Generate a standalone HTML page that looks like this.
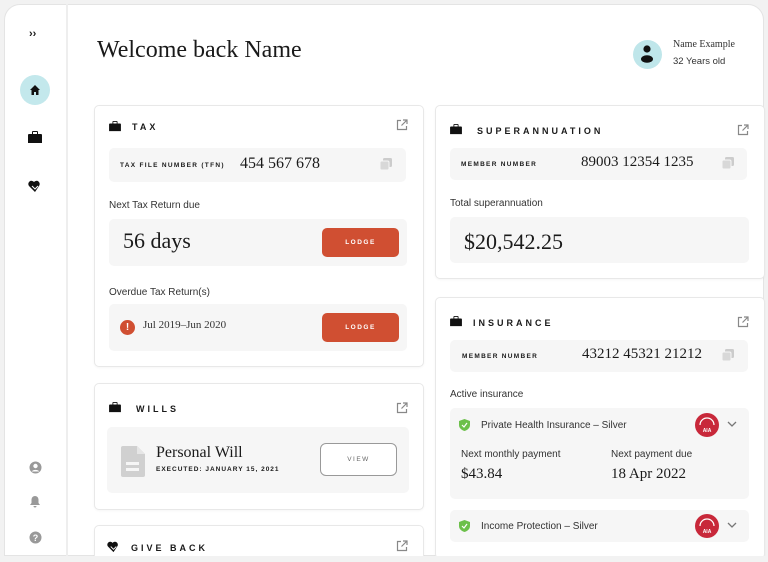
<!DOCTYPE html>
<html><head><style>
*{margin:0;padding:0;box-sizing:border-box}
html,body{width:768px;height:562px;overflow:hidden}
body{background:#f2f2f2;position:relative;font-family:"Liberation Sans",sans-serif;color:#1a1a1a}
#w{position:absolute;left:0;top:0;width:768px;height:562px;overflow:hidden}
.a{position:absolute}
.frame{left:4px;top:4px;width:760px;height:552px;background:#fff;border:1px solid #e4e4e4;border-radius:16px 16px 0 0;overflow:hidden}
.side{left:4px;top:4px;width:64px;height:552px;border-right:2px solid #eeeeee}
.card{background:#fff;border:1px solid #e8e8e8;border-radius:5px;box-shadow:0 1px 2px rgba(0,0,0,.04)}
.box{background:#f6f6f6;border-radius:5px}
.serif{font-family:"Liberation Serif",serif}
.h{font-size:9px;font-weight:bold;letter-spacing:3px}
.lab{font-size:6.5px;font-weight:bold;letter-spacing:1.3px}
.t{font-size:10px;color:#333}
.btn{background:#d04f32;border-radius:5px;color:#fff;font-size:6.5px;font-weight:bold;letter-spacing:1.5px;text-align:center}
</style></head><body><div id="w">
<div class="a frame"></div>
<div class="a side"></div>
<div class="a" style="left:29px;top:28px;font-size:11px;font-weight:bold">››</div>
<div class="a" style="left:20px;top:75px;width:30px;height:30px;border-radius:50%;background:#c3e8ec"></div>
<svg class="a" style="left:29px;top:84px" width="12" height="12" viewBox="0 0 12 12"><path d="M6 1L1 6h1.5v5h2.5V8h2v3h2.5V6H11z" fill="#111"/></svg>
<svg class="a" style="left:28px;top:131px" width="14" height="13" viewBox="0 0 14 13"><path d="M4 3V1a1 1 0 011-1h4a1 1 0 011 1v2h3a1 1 0 011 1v8H0V4a1 1 0 011-1zM5 1v2h4V1z" fill="#111" fill-rule="evenodd"/></svg>
<svg class="a" style="left:28px;top:180px" width="14" height="13" viewBox="0 0 14 13"><path d="M7 12L1 6a3.2 3.2 0 015-4 3.2 3.2 0 015 4z" fill="#111"/><path d="M4 6l3 3 3-3" stroke="#fff" stroke-width="1" fill="none"/></svg>
<svg class="a" style="left:29px;top:461px" width="13" height="13" viewBox="0 0 13 13"><circle cx="6.5" cy="6.5" r="6" fill="#999"/><circle cx="6.5" cy="5" r="2.2" fill="#fff"/><path d="M2.7 10.5a4.5 3.5 0 017.6 0" fill="#fff"/></svg>
<svg class="a" style="left:29px;top:495px" width="12" height="13" viewBox="0 0 12 13"><path d="M6 1a3.5 3.5 0 013.5 3.5V8l1.5 2H1l1.5-2V4.5A3.5 3.5 0 016 1zM4.5 11h3a1.5 1.5 0 01-3 0z" fill="#999"/></svg>
<svg class="a" style="left:29px;top:531px" width="13" height="13" viewBox="0 0 13 13"><circle cx="6.5" cy="6.5" r="6" fill="#999"/><text x="6.5" y="10" font-size="9" font-weight="bold" fill="#fff" text-anchor="middle" font-family="Liberation Sans">?</text></svg>

<div class="a serif" style="left:97px;top:37px;font-size:24px">Welcome back Name</div>
<div class="a" style="left:633px;top:40px;width:29px;height:29px;border-radius:50%;background:#bfe6ea"></div>
<svg class="a" style="left:639px;top:44px" width="16" height="20" viewBox="0 0 16 20"><circle cx="8" cy="5" r="3.6" fill="#111"/><ellipse cx="8" cy="15" rx="6" ry="3.8" fill="#111"/></svg>
<div class="a serif" style="left:673px;top:39px;font-size:10px;color:#333">Name Example</div>
<div class="a" style="left:673px;top:56px;font-size:9.5px;color:#333">32 Years old</div>

<div class="a card" style="left:94px;top:105px;width:330px;height:262px"></div>
<svg class="a" style="left:109px;top:121px" width="12" height="11" viewBox="0 0 14 13"><path d="M4 3V1a1 1 0 011-1h4a1 1 0 011 1v2h3a1 1 0 011 1v8H0V4a1 1 0 011-1zM5 1v2h4V1z" fill="#111" fill-rule="evenodd"/></svg>
<div class="a h" style="left:132px;top:122px">TAX</div>
<svg class="a" style="left:396px;top:119px" width="12" height="12" viewBox="0 0 12 12"><path d="M5 1.5H1.5v9h9V7M7 1h4v4M11 1L5.5 6.5" stroke="#888" stroke-width="1.2" fill="none"/></svg>
<div class="a box" style="left:109px;top:148px;width:297px;height:34px"></div>
<div class="a lab" style="left:120px;top:162px">TAX FILE NUMBER (TFN)</div>
<div class="a serif" style="left:240px;top:155px;font-size:16px">454 567 678</div>
<svg class="a" style="left:380px;top:158px" width="12" height="12" viewBox="0 0 12 12"><rect x="3" y="0" width="9" height="9" rx="1.5" fill="#ccc"/><rect x="0" y="3" width="9" height="9" rx="1.5" fill="#d8d8d8" stroke="#f6f6f6"/></svg>
<div class="a t" style="left:109px;top:200px">Next Tax Return due</div>
<div class="a box" style="left:109px;top:219px;width:298px;height:47px"></div>
<div class="a serif" style="left:123px;top:228px;font-size:22px">56 days</div>
<div class="a btn" style="left:322px;top:228px;width:77px;height:29px;line-height:29px">LODGE</div>
<div class="a t" style="left:109px;top:287px">Overdue Tax Return(s)</div>
<div class="a box" style="left:109px;top:304px;width:298px;height:47px"></div>
<div class="a" style="left:120px;top:320px;width:15px;height:15px;border-radius:50%;background:#d04f32;color:#fff;font-size:10px;font-weight:bold;text-align:center;line-height:15px">!</div>
<div class="a serif" style="left:143px;top:319px;font-size:11px;color:#333">Jul 2019–Jun 2020</div>
<div class="a btn" style="left:322px;top:313px;width:77px;height:29px;line-height:29px">LODGE</div>

<div class="a card" style="left:94px;top:383px;width:330px;height:127px"></div>
<svg class="a" style="left:109px;top:402px" width="12" height="11" viewBox="0 0 14 13"><path d="M4 3V1a1 1 0 011-1h4a1 1 0 011 1v2h3a1 1 0 011 1v8H0V4a1 1 0 011-1zM5 1v2h4V1z" fill="#111" fill-rule="evenodd"/></svg>
<div class="a h" style="left:136px;top:404px">WILLS</div>
<svg class="a" style="left:396px;top:402px" width="12" height="12" viewBox="0 0 12 12"><path d="M5 1.5H1.5v9h9V7M7 1h4v4M11 1L5.5 6.5" stroke="#888" stroke-width="1.2" fill="none"/></svg>
<div class="a box" style="left:107px;top:427px;width:302px;height:66px"></div>
<svg class="a" style="left:121px;top:446px" width="24" height="31" viewBox="0 0 24 31"><path d="M2 0h14l8 8v21a2 2 0 01-2 2H2a2 2 0 01-2-2V2a2 2 0 012-2z" fill="#d0d0d0"/><path d="M16 0v8h8" fill="#e6e6e6"/><rect x="5" y="16" width="13" height="3" fill="#f6f6f6"/><rect x="5" y="22" width="13" height="3" fill="#f6f6f6"/></svg>
<div class="a serif" style="left:156px;top:444px;font-size:16px">Personal Will</div>
<div class="a lab" style="left:156px;top:466px;letter-spacing:1px">EXECUTED: JANUARY 15, 2021</div>
<div class="a" style="left:320px;top:443px;width:77px;height:33px;border:1px solid #999;border-radius:6px;background:#fff;font-size:6.5px;letter-spacing:1.5px;color:#666;text-align:center;line-height:31px">VIEW</div>

<div class="a card" style="left:94px;top:525px;width:330px;height:60px"></div>
<svg class="a" style="left:107px;top:541px" width="13" height="12" viewBox="0 0 14 13"><path d="M7 12L1 6a3.2 3.2 0 015-4 3.2 3.2 0 015 4z" fill="#111"/><path d="M4 6l3 3 3-3" stroke="#fff" stroke-width="1" fill="none"/></svg>
<div class="a h" style="left:131px;top:543px">GIVE BACK</div>
<svg class="a" style="left:396px;top:540px" width="12" height="12" viewBox="0 0 12 12"><path d="M5 1.5H1.5v9h9V7M7 1h4v4M11 1L5.5 6.5" stroke="#888" stroke-width="1.2" fill="none"/></svg>

<div class="a card" style="left:435px;top:105px;width:330px;height:174px"></div>
<svg class="a" style="left:450px;top:124px" width="12" height="11" viewBox="0 0 14 13"><path d="M4 3V1a1 1 0 011-1h4a1 1 0 011 1v2h3a1 1 0 011 1v8H0V4a1 1 0 011-1zM5 1v2h4V1z" fill="#111" fill-rule="evenodd"/></svg>
<div class="a h" style="left:477px;top:126px">SUPERANNUATION</div>
<svg class="a" style="left:737px;top:124px" width="12" height="12" viewBox="0 0 12 12"><path d="M5 1.5H1.5v9h9V7M7 1h4v4M11 1L5.5 6.5" stroke="#888" stroke-width="1.2" fill="none"/></svg>
<div class="a box" style="left:450px;top:148px;width:297px;height:32px"></div>
<div class="a lab" style="left:461px;top:161px">MEMBER NUMBER</div>
<div class="a serif" style="left:581px;top:154px;font-size:15px">89003 12354 1235</div>
<svg class="a" style="left:722px;top:157px" width="12" height="12" viewBox="0 0 12 12"><rect x="3" y="0" width="9" height="9" rx="1.5" fill="#ccc"/><rect x="0" y="3" width="9" height="9" rx="1.5" fill="#d8d8d8" stroke="#f6f6f6"/></svg>
<div class="a t" style="left:450px;top:198px">Total superannuation</div>
<div class="a box" style="left:450px;top:217px;width:299px;height:46px"></div>
<div class="a serif" style="left:464px;top:229px;font-size:22px">$20,542.25</div>

<div class="a card" style="left:435px;top:297px;width:330px;height:262px"></div>
<svg class="a" style="left:450px;top:316px" width="12" height="11" viewBox="0 0 14 13"><path d="M4 3V1a1 1 0 011-1h4a1 1 0 011 1v2h3a1 1 0 011 1v8H0V4a1 1 0 011-1zM5 1v2h4V1z" fill="#111" fill-rule="evenodd"/></svg>
<div class="a h" style="left:473px;top:318px">INSURANCE</div>
<svg class="a" style="left:737px;top:316px" width="12" height="12" viewBox="0 0 12 12"><path d="M5 1.5H1.5v9h9V7M7 1h4v4M11 1L5.5 6.5" stroke="#888" stroke-width="1.2" fill="none"/></svg>
<div class="a box" style="left:450px;top:340px;width:298px;height:32px"></div>
<div class="a lab" style="left:462px;top:353px">MEMBER NUMBER</div>
<div class="a serif" style="left:582px;top:346px;font-size:15px">43212 45321 21212</div>
<svg class="a" style="left:722px;top:349px" width="12" height="12" viewBox="0 0 12 12"><rect x="3" y="0" width="9" height="9" rx="1.5" fill="#ccc"/><rect x="0" y="3" width="9" height="9" rx="1.5" fill="#d8d8d8" stroke="#f6f6f6"/></svg>
<div class="a t" style="left:450px;top:389px">Active insurance</div>
<div class="a box" style="left:450px;top:408px;width:299px;height:91px"></div>
<svg class="a" style="left:459px;top:419px" width="11" height="12" viewBox="0 0 11 12"><path d="M5.5 0L11 2v4c0 3-2.5 5-5.5 6C2.5 11 0 9 0 6V2z" fill="#6cc04a"/><path d="M3 6l2 2 3-4" stroke="#fff" stroke-width="1.2" fill="none"/></svg>
<div class="a t" style="left:481px;top:420px">Private Health Insurance – Silver</div>
<svg class="a" style="left:695px;top:413px" width="24" height="24" viewBox="0 0 24 24"><circle cx="12" cy="12" r="12" fill="#c8283a"/><path d="M5 12a7 7 0 0114 0" stroke="#fff" stroke-width="1.2" fill="none"/><text x="12" y="19" font-size="5" fill="#fff" text-anchor="middle" font-family="Liberation Sans" font-weight="bold">AIA</text></svg>
<svg class="a" style="left:727px;top:421px" width="10" height="7" viewBox="0 0 10 7"><path d="M1 1l4 4 4-4" stroke="#777" stroke-width="1.3" fill="none"/></svg>
<div class="a t" style="left:461px;top:449px">Next monthly payment</div>
<div class="a serif" style="left:461px;top:466px;font-size:15px">$43.84</div>
<div class="a t" style="left:611px;top:449px">Next payment due</div>
<div class="a serif" style="left:611px;top:466px;font-size:15px">18 Apr 2022</div>
<div class="a box" style="left:450px;top:510px;width:299px;height:32px"></div>
<svg class="a" style="left:459px;top:520px" width="11" height="12" viewBox="0 0 11 12"><path d="M5.5 0L11 2v4c0 3-2.5 5-5.5 6C2.5 11 0 9 0 6V2z" fill="#6cc04a"/><path d="M3 6l2 2 3-4" stroke="#fff" stroke-width="1.2" fill="none"/></svg>
<div class="a t" style="left:481px;top:521px">Income Protection – Silver</div>
<svg class="a" style="left:695px;top:514px" width="24" height="24" viewBox="0 0 24 24"><circle cx="12" cy="12" r="12" fill="#c8283a"/><path d="M5 12a7 7 0 0114 0" stroke="#fff" stroke-width="1.2" fill="none"/><text x="12" y="19" font-size="5" fill="#fff" text-anchor="middle" font-family="Liberation Sans" font-weight="bold">AIA</text></svg>
<svg class="a" style="left:727px;top:522px" width="10" height="7" viewBox="0 0 10 7"><path d="M1 1l4 4 4-4" stroke="#777" stroke-width="1.3" fill="none"/></svg>
<div class="a" style="left:0;top:556px;width:768px;height:6px;background:#f2f2f2"></div>
</div></body></html>
